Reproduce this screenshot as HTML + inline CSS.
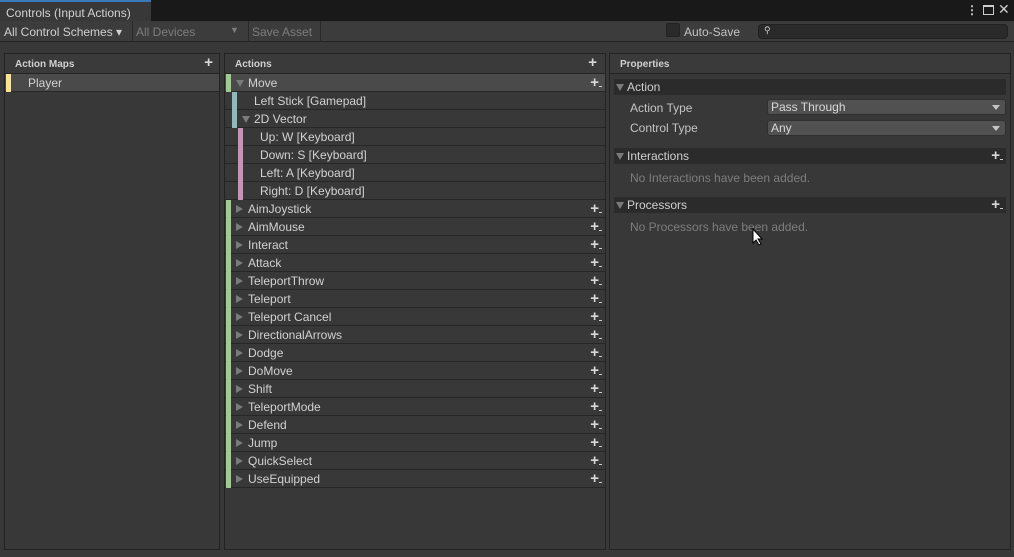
<!DOCTYPE html><html><head><style>
*{box-sizing:border-box;margin:0;padding:0}
body{width:1014px;height:557px;background:#383838;font-family:"Liberation Sans",sans-serif;font-size:12px;color:#c4c4c4;position:relative;overflow:hidden}
.a{position:absolute}
.title{left:0;top:0;width:1014px;height:21px;background:#191919}
.tab{left:0;top:0;width:151px;height:21px;background:#383838;border-top:2px solid #3a79bb;padding:4px 0 0 6px;color:#d2d2d2}
.tb{left:0;top:21px;width:1014px;height:21px;background:#3c3c3c;border-bottom:1px solid #232323}
.panel{border:1px solid #232323;background:#383838}
.hdr{height:20px;border-bottom:1px solid #232323;font-weight:bold;font-size:10px;padding:5px 0 0 10px;color:#d0d0d0;background:#3a3a3a}
.row{position:absolute;left:0;right:0;height:18px;border-bottom:1px solid #262626;padding-top:2px}
.strip{position:absolute;top:0;width:5px;height:18px}
.tri{position:absolute;top:5px;width:0;height:0;border-top:4px solid transparent;border-bottom:4px solid transparent;border-left:7px solid #7a7a7a}
.tri.d{border-left:4px solid transparent;border-right:4px solid transparent;border-top:7px solid #7a7a7a;border-bottom:0;top:6px}
.plus{position:absolute;right:6px;top:1px;font-size:15px;color:#d8d8d8;font-weight:bold;line-height:15px}
.plus.s:after{content:"";position:absolute;right:-3px;top:11px;width:3px;height:1px;background:#ccc}
.fold{position:absolute;left:4px;right:4px;height:16px;background:#2b2b2b;padding:1px 0 0 13px;color:#d0d0d0}
.dd{position:absolute;left:157px;right:4px;height:16px;background:#515151;border:1px solid #303030;border-radius:3px;padding:0 0 0 3px;color:#d8d8d8}
.dd:after{content:"";position:absolute;right:5px;top:5px;border-left:4px solid transparent;border-right:4px solid transparent;border-top:5px solid #c4c4c4}
.gray{color:#7d7d7d}
</style></head><body>
<div class="a title"></div>
<div class="a tab">Controls (Input Actions)</div>
<div class="a" style="right:36px;top:3px;color:#ccc;font-weight:bold">⋮</div>
<div class="a" style="left:983px;top:5px;width:11px;height:10px;border:1px solid #ccc;border-top-width:2px"></div>
<div class="a" style="left:998px;top:1px;color:#ccc;font-size:14px">✕</div>
<div class="a tb"></div>
<div class="a" style="left:4px;top:25px;color:#d0d0d0">All Control Schemes ▾</div>
<div class="a" style="left:132px;top:21px;width:1px;height:21px;background:#2a2a2a"></div>
<div class="a gray" style="left:136px;top:25px">All Devices</div>
<div class="a gray" style="left:230px;top:25px;font-size:9px">▼</div>
<div class="a" style="left:248px;top:21px;width:1px;height:21px;background:#2a2a2a"></div>
<div class="a gray" style="left:252px;top:25px">Save Asset</div>
<div class="a" style="left:320px;top:21px;width:1px;height:21px;background:#2a2a2a"></div>
<div class="a" style="left:666px;top:23px;width:14px;height:14px;background:#2a2a2a;border:1px solid #222;border-radius:2px"></div>
<div class="a" style="left:684px;top:25px;color:#c4c4c4">Auto-Save</div>
<div class="a" style="left:758px;top:24px;width:250px;height:15px;background:#2a2a2a;border:1px solid #212121;border-radius:4px;font-size:9px;padding-left:5px;color:#ccc">⚲</div>

<div class="a panel" style="left:4px;top:53px;width:216px;height:497px">
<div class="hdr">Action Maps</div>
<div class="plus" style="top:1px;right:6px">+</div>
<div class="row" style="top:20px;background:#4a4a4a;padding-left:23px;color:#d2d2d2"><div class="strip" style="left:1px;background:#fde38a"></div>Player</div>
</div>

<div class="a panel" style="left:224px;top:53px;width:382px;height:497px">
<div class="hdr">Actions</div>
<div class="plus" style="top:1px;right:8px;">+</div>
<div id="list"></div>
</div>

<div class="a panel" style="left:609px;top:53px;width:402px;height:497px">
<div class="hdr">Properties</div>
<div class="fold" style="top:25px"><div class="tri d" style="left:2px;top:5px"></div>Action</div>
<div class="a" style="left:20px;top:47px">Action Type</div>
<div class="dd" style="top:45px">Pass Through</div>
<div class="a" style="left:20px;top:67px">Control Type</div>
<div class="dd" style="top:66px">Any</div>
<div class="fold" style="top:94px"><div class="tri d" style="left:2px;top:5px"></div>Interactions<div class="plus s" style="right:6px;top:0">+</div></div>
<div class="a gray" style="left:20px;top:117px">No Interactions have been added.</div>
<div class="fold" style="top:143px"><div class="tri d" style="left:2px;top:5px"></div>Processors<div class="plus s" style="right:6px;top:0">+</div></div>
<div class="a gray" style="left:20px;top:166px">No Processors have been added.</div>
<svg class="a" style="left:142px;top:174px" width="12" height="18" viewBox="0 0 12 18"><path d="M1 1 L1 15 L4 12 L7 17 L9 16 L6 11 L10 11 Z" fill="#fff" stroke="#000" stroke-width="1"/></svg>
</div>
<script>
var rows=[["Move",0,1],["Left Stick [Gamepad]",1],["2D Vector",1,1],["Up: W [Keyboard]",2],["Down: S [Keyboard]",2],["Left: A [Keyboard]",2],["Right: D [Keyboard]",2]];
["AimJoystick","AimMouse","Interact","Attack","TeleportThrow","Teleport","Teleport Cancel","DirectionalArrows","Dodge","DoMove","Shift","TeleportMode","Defend","Jump","QuickSelect","UseEquipped"].forEach(function(n){rows.push([n,0,0])});
var h="";rows.forEach(function(r,i){var t=20+i*18,lv=r[1];
var col=lv==0?"#9ccd8a":lv==1?"#8fb8bf":"#c993b5";var sl=1+lv*6;
var tx=lv==0?23:lv==1?29:35;
h+='<div class="row" style="top:'+t+'px;padding-left:'+tx+'px;'+(i==0?'background:#4a4a4a;':'')+'color:#d2d2d2"><div class="strip" style="left:'+sl+'px;background:'+col+'"></div>';
if(lv<2&&r[2]!==undefined){h+='<div class="tri'+(r[2]?' d':'')+'" style="left:'+(lv==0?11:17)+'px"></div>';}
h+=r[0];if(lv==0)h+='<div class="plus s">+</div>';h+='</div>';});
document.getElementById("list").innerHTML=h;
</script>
</body></html>
